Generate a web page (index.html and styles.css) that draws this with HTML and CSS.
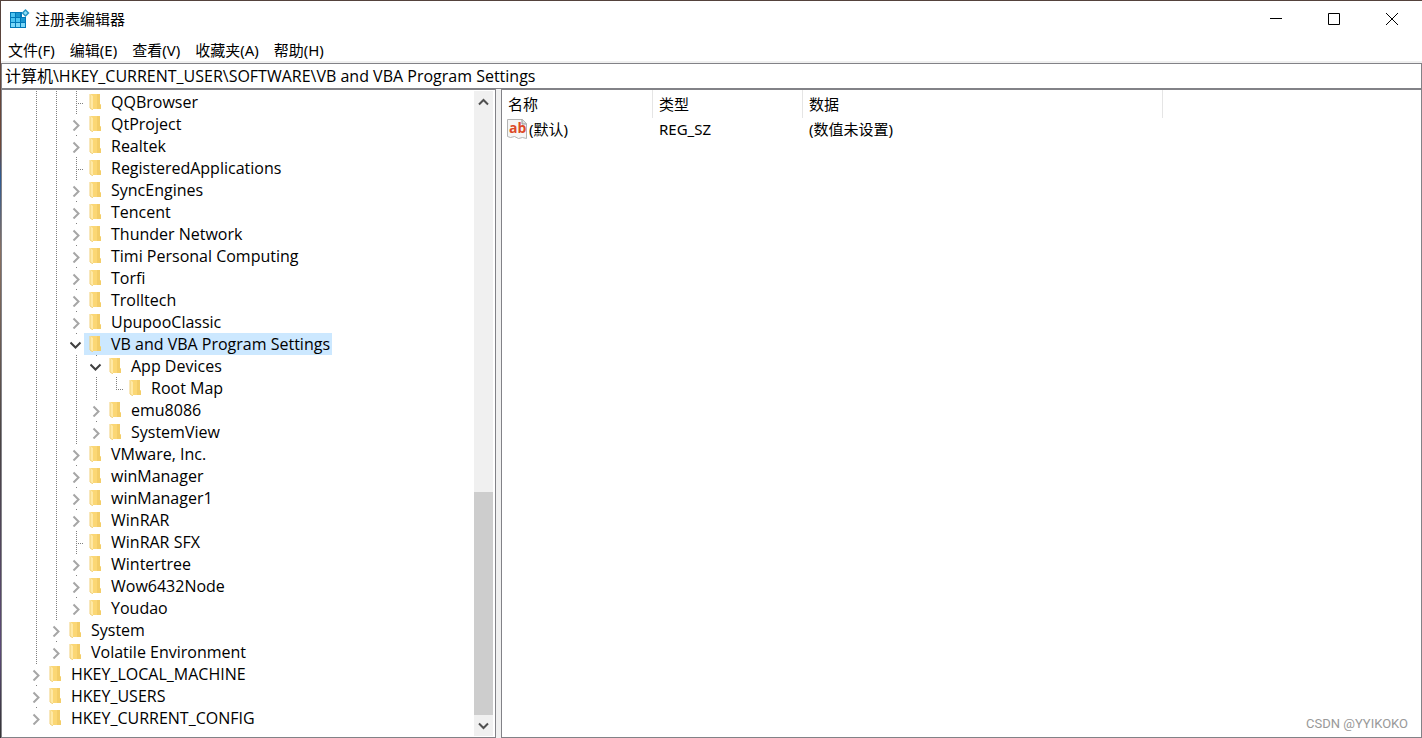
FILE: index.html
```html
<!DOCTYPE html>
<html lang="zh-CN">
<head>
	<meta charset="UTF-8">
	<title>注册表编辑器</title>
	<link rel="stylesheet" href="styles.css">
</head>
<body>

<!-- shared icons -->
<svg class="defs" width="0" height="0" aria-hidden="true">
	<symbol id="folder" viewBox="0 0 14 16">
		<path d="M3 0h9v10l1 1v4H4z" fill="#fbd775"/>
		<path d="M9 0h3v10l1 1v4H9z" fill="#f3cd68"/>
		<path d="M2 0l3 2v14l-3-2z" fill="#ffe9a6"/>
		<path d="M2 0v14l3 2" fill="none" stroke="#f0cf78"/>
	</symbol>
	<symbol id="closed" viewBox="0 0 12 12">
		<path d="M3.500 1.500l5 5-5 5" fill="none" stroke="#a6a6a6" stroke-width="2"/>
	</symbol>
	<symbol id="opened" viewBox="0 0 12 12">
		<path d="M.5 3.500l5 5 5-5" fill="none" stroke="#404040" stroke-width="2"/>
	</symbol>
</svg>

<div class="window">
	<header class="titlebar">
		<svg class="logo" width="20" height="20" viewBox="0 0 20 20">
			<path d="M0 3h12v5h4v11H0z" fill="#0078b8"/>
			<path d="M1 4h4v4H1zM6 4h4v4H6zM1 9h4v4H1zM6 9h4v4H6zM11 9h4v4h-4z" fill="#4cc3f0"/>
			<path d="M1 14h4v4H1zM6 14h4v4H6zM11 14h4v4h-4z" fill="#7ad7f8"/>
			<path d="M6 4h4v4H6zM11 9h4v4h-4z" fill="#1996d0"/>
			<path d="M15.500 0l4 4-4 4-4-4z" fill="#2694c4"/>
			<path d="M15.500 2l2 2-2 2-2-2z" fill="#8fe0f8"/>
		</svg>
		<h1>注册表编辑器</h1>
		<div class="controls">
			<button aria-label="最小化"><svg width="12" height="12"><path d="M0 5.500h12" stroke="#000"/></svg></button>
			<button aria-label="最大化"><svg width="12" height="12"><path d="M.5.5h11v11H.5z" fill="none" stroke="#000"/></svg></button>
			<button aria-label="关闭"><svg width="12" height="12"><path d="M0 0l12 12M12 0L0 12" stroke="#000"/></svg></button>
		</div>
	</header>

	<nav class="menu">
		<button>文件(F)</button>
		<button>编辑(E)</button>
		<button>查看(V)</button>
		<button>收藏夹(A)</button>
		<button>帮助(H)</button>
	</nav>

	<input class="address" type="text" aria-label="地址" value="计算机\HKEY_CURRENT_USER\SOFTWARE\VB and VBA Program Settings">

	<main class="panes">
		<section class="keys">
			<ul class="tree">
				<li class="more">
					<ul>
						<li class="more">
							<ul>
								<li><div class="row leaf"><span class="twist"></span><span class="key"><svg><use href="#folder"/></svg>QQBrowser</span></div></li>
								<li><div class="row"><button class="twist" aria-label="展开"><svg><use href="#closed"/></svg></button><span class="key"><svg><use href="#folder"/></svg>QtProject</span></div></li>
								<li><div class="row"><button class="twist" aria-label="展开"><svg><use href="#closed"/></svg></button><span class="key"><svg><use href="#folder"/></svg>Realtek</span></div></li>
								<li><div class="row leaf"><span class="twist"></span><span class="key"><svg><use href="#folder"/></svg>RegisteredApplications</span></div></li>
								<li><div class="row"><button class="twist" aria-label="展开"><svg><use href="#closed"/></svg></button><span class="key"><svg><use href="#folder"/></svg>SyncEngines</span></div></li>
								<li><div class="row"><button class="twist" aria-label="展开"><svg><use href="#closed"/></svg></button><span class="key"><svg><use href="#folder"/></svg>Tencent</span></div></li>
								<li><div class="row"><button class="twist" aria-label="展开"><svg><use href="#closed"/></svg></button><span class="key"><svg><use href="#folder"/></svg>Thunder Network</span></div></li>
								<li><div class="row"><button class="twist" aria-label="展开"><svg><use href="#closed"/></svg></button><span class="key"><svg><use href="#folder"/></svg>Timi Personal Computing</span></div></li>
								<li><div class="row"><button class="twist" aria-label="展开"><svg><use href="#closed"/></svg></button><span class="key"><svg><use href="#folder"/></svg>Torfi</span></div></li>
								<li><div class="row"><button class="twist" aria-label="展开"><svg><use href="#closed"/></svg></button><span class="key"><svg><use href="#folder"/></svg>Trolltech</span></div></li>
								<li><div class="row"><button class="twist" aria-label="展开"><svg><use href="#closed"/></svg></button><span class="key"><svg><use href="#folder"/></svg>UpupooClassic</span></div></li>
								<li class="more">
									<div class="row"><button class="twist" aria-label="折叠"><svg><use href="#opened"/></svg></button><span class="key selected"><svg><use href="#folder"/></svg>VB and VBA Program Settings</span></div>
									<ul>
										<li class="more">
											<div class="row"><button class="twist" aria-label="折叠"><svg><use href="#opened"/></svg></button><span class="key"><svg><use href="#folder"/></svg>App Devices</span></div>
											<ul>
												<li><div class="row leaf last"><span class="twist"></span><span class="key"><svg><use href="#folder"/></svg>Root Map</span></div></li>
											</ul>
										</li>
										<li><div class="row"><button class="twist" aria-label="展开"><svg><use href="#closed"/></svg></button><span class="key"><svg><use href="#folder"/></svg>emu8086</span></div></li>
										<li><div class="row"><button class="twist" aria-label="展开"><svg><use href="#closed"/></svg></button><span class="key"><svg><use href="#folder"/></svg>SystemView</span></div></li>
									</ul>
								</li>
								<li><div class="row"><button class="twist" aria-label="展开"><svg><use href="#closed"/></svg></button><span class="key"><svg><use href="#folder"/></svg>VMware, Inc.</span></div></li>
								<li><div class="row"><button class="twist" aria-label="展开"><svg><use href="#closed"/></svg></button><span class="key"><svg><use href="#folder"/></svg>winManager</span></div></li>
								<li><div class="row"><button class="twist" aria-label="展开"><svg><use href="#closed"/></svg></button><span class="key"><svg><use href="#folder"/></svg>winManager1</span></div></li>
								<li><div class="row"><button class="twist" aria-label="展开"><svg><use href="#closed"/></svg></button><span class="key"><svg><use href="#folder"/></svg>WinRAR</span></div></li>
								<li><div class="row leaf"><span class="twist"></span><span class="key"><svg><use href="#folder"/></svg>WinRAR SFX</span></div></li>
								<li><div class="row"><button class="twist" aria-label="展开"><svg><use href="#closed"/></svg></button><span class="key"><svg><use href="#folder"/></svg>Wintertree</span></div></li>
								<li><div class="row"><button class="twist" aria-label="展开"><svg><use href="#closed"/></svg></button><span class="key"><svg><use href="#folder"/></svg>Wow6432Node</span></div></li>
								<li><div class="row"><button class="twist" aria-label="展开"><svg><use href="#closed"/></svg></button><span class="key"><svg><use href="#folder"/></svg>Youdao</span></div></li>
							</ul>
						</li>
						<li><div class="row"><button class="twist" aria-label="展开"><svg><use href="#closed"/></svg></button><span class="key"><svg><use href="#folder"/></svg>System</span></div></li>
						<li><div class="row"><button class="twist" aria-label="展开"><svg><use href="#closed"/></svg></button><span class="key"><svg><use href="#folder"/></svg>Volatile Environment</span></div></li>
					</ul>
				</li>
				<li><div class="row"><button class="twist" aria-label="展开"><svg><use href="#closed"/></svg></button><span class="key"><svg><use href="#folder"/></svg>HKEY_LOCAL_MACHINE</span></div></li>
				<li><div class="row"><button class="twist" aria-label="展开"><svg><use href="#closed"/></svg></button><span class="key"><svg><use href="#folder"/></svg>HKEY_USERS</span></div></li>
				<li><div class="row"><button class="twist" aria-label="展开"><svg><use href="#closed"/></svg></button><span class="key"><svg><use href="#folder"/></svg>HKEY_CURRENT_CONFIG</span></div></li>
			</ul>
			<div class="scrollbar">
				<button aria-label="向上滚动"><svg width="11" height="8"><path d="M1 6.500l4.500-4.500L10 6.500" fill="none" stroke="#505050" stroke-width="2"/></svg></button>
				<div class="track"><div class="thumb"></div></div>
				<button aria-label="向下滚动"><svg width="11" height="8"><path d="M1 1.500L5.500 6 10 1.500" fill="none" stroke="#505050" stroke-width="2"/></svg></button>
			</div>
		</section>

		<section class="values">
			<table>
				<thead>
					<tr><th class="name">名称</th><th class="type">类型</th><th class="data">数据</th><th></th></tr>
				</thead>
				<tbody>
					<tr>
						<td>
							<span class="value">
								<svg width="20" height="20" viewBox="0 0 20 20">
									<path d="M.5.500h15l4 4v15l-4-1-4 1-4-2-4 1-3-1z" fill="#f6f6f6" stroke="#b4b4b4"/>
									<path d="M15 .5v4.500h4.500" fill="#ddd" stroke="#999"/>
									<text x="2" y="14">ab</text>
								</svg>
								(默认)
							</span>
						</td>
						<td>REG_SZ</td>
						<td>(数值未设置)</td>
						<td></td>
					</tr>
				</tbody>
			</table>
			<span class="watermark">CSDN @YYIKOKO</span>
		</section>
	</main>
</div>

</body>
</html>
```
FILE: styles.css
```css
* {
	box-sizing: border-box;
}

body {
	margin: 0;
	height: 100vh;
	padding: 1px 0 0 1px;
	overflow: hidden;
	font: 15px/22px "Noto Sans", "Noto Sans CJK SC", sans-serif;
	color: #000;
	background: linear-gradient(#54423c, #704838 20%, #2c5a94 24%, #8a7060 34%, #4a4444 60%, #5c4a78 88%, #333);
}

button {
	border: 0;
	padding: 0;
	font: inherit;
	color: inherit;
	background: none;
}

ul {
	list-style: none;
	margin: 0;
	padding: 0;
}

.defs {
	position: absolute;
}

.window {
	height: 100%;
	display: flex;
	flex-direction: column;
	background: #fff;
}

/* title bar */
.titlebar {
	display: flex;
	align-items: center;
	height: 36px;
	margin-bottom: 2px;
	padding: 0 1px 0 9px;
	gap: 5px;
}

.titlebar h1 {
	flex: 1;
	margin: 0;
	font-size: 15px;
	font-weight: normal;
}

.controls {
	display: flex;
}

.controls button {
	display: flex;
	align-items: center;
	justify-content: center;
	width: 58px;
	height: 36px;
}

.menu {
	display: flex;
	gap: 15px;
	height: 24px;
	padding-left: 7px;
	border-bottom: 2px solid #f0f0f0;
}

.address {
	height: 26px;
	padding: 0 3px 2px;
	border: 1px solid #828287;
	font: 16px/22px "Open Sans", "Noto Sans CJK SC", sans-serif;
	color: inherit;
	outline: none;
}

/* panes */
.panes {
	flex: 1;
	display: flex;
	gap: 5px;
	min-height: 0;
	background: #f0f0f0;
}

.keys,
.values {
	border: 1px solid #828287;
	background: #fff;
}

.keys {
	display: flex;
	width: 495px;
	padding: 1px 2px 1px 0;
}

.values {
	flex: 1;
	position: relative;
}

/* key tree, dotted guides sit 10px into each level */
.tree {
	flex: 1;
	padding-left: 24px;
	overflow: hidden;
	font: 16px/22px "Open Sans", sans-serif;
}

.tree ul {
	padding-left: 20px;
}

.more > ul {
	background: repeating-linear-gradient(#808080 0 1px, transparent 1px 2px) 10px 0 / 1px 100% no-repeat;
}

.row {
	display: flex;
	height: 22px;
}

.twist {
	width: 18px;
	height: 22px;
	padding: 2px 0 0 4px;
	background: linear-gradient(#808080, #808080) 10px 0 / 1px 1px no-repeat;
}

.twist svg {
	display: block;
	width: 12px;
	height: 12px;
}

.leaf .twist {
	background:
		repeating-linear-gradient(#808080 0 1px, transparent 1px 2px) 10px 0 / 1px 22px no-repeat,
		repeating-linear-gradient(90deg, #808080 0 1px, transparent 1px 2px) 10px 12px / 8px 1px no-repeat;
}

.last .twist {
	background-size: 1px 12px, 8px 1px;
}

.key {
	display: flex;
	gap: 9px;
	padding: 0 4px;
	white-space: nowrap;
}

.key svg {
	width: 14px;
	height: 16px;
	margin-top: 3px;
}

.selected {
	padding-right: 2px;
	background: #cce8ff;
}

.scrollbar {
	display: flex;
	flex-direction: column;
	width: 19px;
	background: #f0f0f0;
}

.scrollbar button {
	display: flex;
	align-items: center;
	justify-content: center;
	height: 21px;
}

.track {
	flex: 1;
	display: flex;
	flex-direction: column;
	justify-content: flex-end;
}

.thumb {
	height: 37%;
	background: #cdcdcd;
}

/* value list */
table {
	width: 100%;
	table-layout: fixed;
	border-collapse: separate;
	border-spacing: 0;
}

th,
td {
	padding: 0 6px;
	text-align: left;
	font-weight: normal;
	white-space: nowrap;
}

th {
	height: 28px;
	border-right: 1px solid #e5e5e5;
}

th:last-child {
	border-right: 0;
}

.name {
	width: 151px;
}

.type {
	width: 150px;
}

.data {
	width: 360px;
}

td:first-child {
	padding-left: 5px;
}

.value {
	display: flex;
	align-items: center;
	gap: 2px;
}

.value text {
	font: bold 14px "Open Sans", sans-serif;
	fill: #dc4a28;
}

.watermark {
	position: absolute;
	right: 13px;
	bottom: 2px;
	font: 13px/22px Roboto, sans-serif;
	color: #999;
}
```
